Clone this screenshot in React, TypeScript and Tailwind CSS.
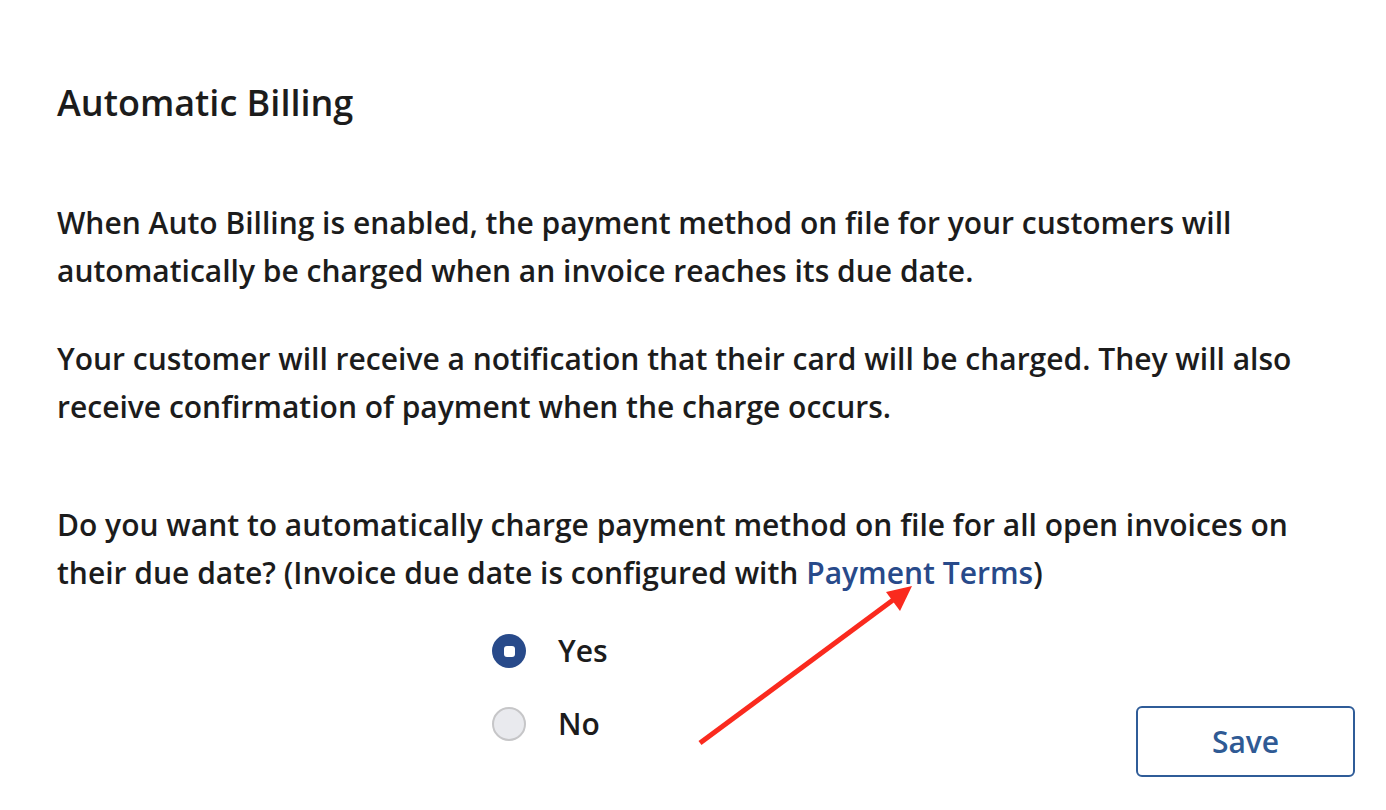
import * as React from 'react'

const font = { fontFamily: '"Open Sans", "Noto Sans", sans-serif' }

function Radio({ checked, label }: { checked: boolean; label: string }) {
  return (
    <label className="flex items-center gap-[32px] cursor-pointer">
      {checked ? (
        <span className="flex h-[34px] w-[34px] items-center justify-center rounded-full bg-[#284a8a]">
          <span className="h-[11px] w-[11px] rounded-[3px] bg-white" />
        </span>
      ) : (
        <span className="h-[34px] w-[34px] rounded-full border-2 border-[#c6c6c8] bg-[#e9eaee]" />
      )}
      <span className="text-[30px] font-semibold leading-[44px] text-[#1c1c1c]">{label}</span>
    </label>
  )
}

export default function App() {
  const [autoBill, setAutoBill] = React.useState(true)

  return (
    <div className="relative h-[810px] w-[1386px] bg-white text-[#1c1c1c]" style={font}>
      <div className="pl-[57px] pr-[31px] pt-[80px]">
        <h1 className="text-[36px] font-semibold leading-[46px]">Automatic Billing</h1>

        <div className="mt-[73px] space-y-[40px] text-[30px] font-semibold leading-[48px]">
          <p>
            When Auto Billing is enabled, the payment method on file for your customers will
            <br />
            automatically be charged when an invoice reaches its due date.
          </p>
          <p>
            Your customer will receive a notification that their card will be charged. They will also
            <br />
            receive confirmation of payment when the charge occurs.
          </p>
        </div>

        <p className="mt-[70px] text-[30px] font-semibold leading-[48px]">
          Do you want to automatically charge payment method on file for all open invoices on
          <br />
          their due date? (Invoice due date is configured with{' '}
          <a href="#" className="text-[#284a8a]">Payment Terms</a>)
        </p>

        <div className="mt-[32px] flex items-end">
          <div className="ml-[435px] flex flex-col gap-[29px]" onClick={() => setAutoBill(!autoBill)}>
            <Radio checked={autoBill} label="Yes" />
            <Radio checked={!autoBill} label="No" />
          </div>
          <button className="ml-auto mb-[-31px] h-[71px] w-[219px] rounded-[6px] border-2 border-[#2f5c98] text-[30px] font-semibold text-[#2f5a94]">
            Save
          </button>
        </div>
      </div>

      <svg className="pointer-events-none absolute left-0 top-0" width="1386" height="810">
        <line x1="700" y1="743" x2="893" y2="600" stroke="#fa2a1e" strokeWidth="5" />
        <polygon points="912,586 886,592 900,611" fill="#fa2a1e" />
      </svg>
    </div>
  )
}
